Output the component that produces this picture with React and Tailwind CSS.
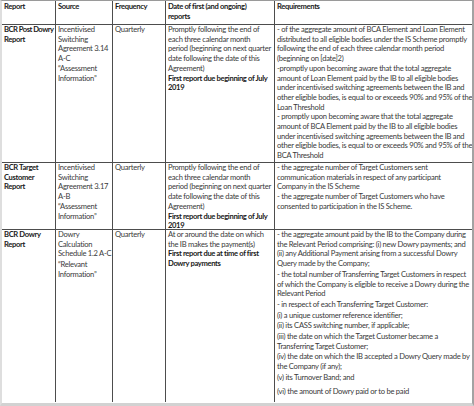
import React from "react";

const L = ({ children, b, cls = "" }) => (
  <div className={`whitespace-nowrap ${b ? "font-bold text-[#1a1a1a] tracking-[-0.35px]" : ""} ${cls}`}>{children}</div>
);

const Cell = ({ w, last, children, cls = "" }) => (
  <div
    className={`${w} shrink-0 pl-[2px] ${last ? "" : "border-r border-[#4d4d4d]"} ${cls}`}
  >
    {children}
  </div>
);

const Row = ({ h, bottom = true, cells }) => (
  <div className={`flex ${h} ${bottom ? "border-b border-[#4d4d4d]" : ""}`}>
    <Cell w="w-[54px]">{cells[0]}</Cell>
    <Cell w="w-[57px]">{cells[1]}</Cell>
    <Cell w="w-[53px]">{cells[2]}</Cell>
    <Cell w="w-[109px]">{cells[3]}</Cell>
    <Cell w="w-[197px]" last>
      {cells[4]}
    </Cell>
  </div>
);

export default function App() {
  return (
    <div
      className="w-[474px] h-[406px] bg-white overflow-hidden border-t border-[#9a9a9a] border-l-2 border-l-[#dedede] border-r-2 border-r-[#a3a3a3] border-b-[3px] border-b-[#d2d2d2] text-[7.6px] leading-[9.7px] tracking-[-0.26px] text-[#3a3a3a]"
      style={{ fontFamily: "Lato, 'Liberation Sans', sans-serif" }}
    >
      <Row
        h="h-[24px]"
        cells={[
          <div className="pt-[1px]"><L b>Report</L></div>,
          <div className="pt-[1px]"><L b>Source</L></div>,
          <div className="pt-[1px]"><L b>Frequency</L></div>,
          <div className="pt-[1px]">
            <L b>Date of first (and ongoing)</L>
            <L b>reports</L>
          </div>,
          <div className="pt-[1px]"><L b>Requirements</L></div>,
        ]}
      />
      <Row
        h="h-[138px]"
        cells={[
          <div>
            <div className="whitespace-nowrap font-bold text-[#1a1a1a] tracking-[-0.5px]">BCR Post Dowry</div>
            <L b>Report</L>
          </div>,
          <div>
            <L>Incentivised</L>
            <L>Switching</L>
            <L>Agreement 3.14</L>
            <L>A-C</L>
            <L>“Assessment</L>
            <L>Information”</L>
          </div>,
          <div>
            <L>Quarterly</L>
          </div>,
          <div>
            <L>Promptly following the end of</L>
            <L>each three calendar month</L>
            <L>period (beginning on next quarter</L>
            <L>date following the date of this</L>
            <L>Agreement)</L>
            <L b>First report due beginning of July</L>
            <L b>2019</L>
          </div>,
          <div>
            <L>- of the aggregate amount of BCA Element and Loan Element</L>
            <L>distributed to all eligible bodies under the IS Scheme promptly</L>
            <L>following the end of each three calendar month period</L>
            <L>(beginning on [date]2)</L>
            <L>-promptly upon becoming aware that the total aggregate</L>
            <L>amount of Loan Element paid by the IB to all eligible bodies</L>
            <L>under incentivised switching agreements between the IB and</L>
            <L>other eligible bodies, is equal to or exceeds 90% and 95% of the</L>
            <L>Loan Threshold</L>
            <L>- promptly upon becoming aware that the total aggregate</L>
            <L>amount of BCA Element paid by the IB to all eligible bodies</L>
            <L>under incentivised switching agreements between the IB and</L>
            <L>other eligible bodies, is equal to or exceeds 90% and 95% of the</L>
            <L>BCA Threshold</L>
          </div>,
        ]}
      />
      <Row
        h="h-[67px]"
        cells={[
          <div>
            <L b>BCR Target</L>
            <L b>Customer</L>
            <L b>Report</L>
          </div>,
          <div>
            <L>Incentivised</L>
            <L>Switching</L>
            <L>Agreement 3.17</L>
            <L>A-B</L>
            <L>“Assessment</L>
            <L>Information”</L>
          </div>,
          <div>
            <L>Quarterly</L>
          </div>,
          <div>
            <L>Promptly following the end of</L>
            <L>each three calendar month</L>
            <L>period (beginning on next quarter</L>
            <L>date following the date of this</L>
            <L>Agreement)</L>
            <L b>First report due beginning of July</L>
            <L b>2019</L>
          </div>,
          <div>
            <L>- the aggregate number of Target Customers sent</L>
            <L>communication materials in respect of any participant</L>
            <L>Company in the IS Scheme</L>
            <L>- the aggregate number of Target Customers who have</L>
            <L>consented to participation in the IS Scheme.</L>
          </div>,
        ]}
      />
      <Row
        h="h-[172px]"
        bottom={false}
        cells={[
          <div>
            <L b>BCR Dowry</L>
            <L b>Report</L>
          </div>,
          <div>
            <L>Dowry</L>
            <L>Calculation</L>
            <L>Schedule 1.2 A-C</L>
            <L cls="mt-[1px]">“Relevant</L>
            <L>Information”</L>
          </div>,
          <div>
            <L>Quarterly</L>
          </div>,
          <div>
            <L>At or around the date on which</L>
            <L>the IB makes the payment(s)</L>
            <L b>First report due at time of first</L>
            <L b>Dowry payments</L>
          </div>,
          <div>
            <L>- the aggregate amount paid by the IB to the Company during</L>
            <L>the Relevant Period comprising: (i) new Dowry payments; and</L>
            <L>(ii) any Additional Payment arising from a successful Dowry</L>
            <L>Query made by the Company;</L>
            <L cls="mt-[1px]">- the total number of Transferring Target Customers in respect</L>
            <L>of which the Company is eligible to receive a Dowry during the</L>
            <L>Relevant Period</L>
            <L cls="mt-[1px]">- in respect of each Transferring Target Customer:</L>
            <L cls="mt-[1px]">(i) a unique customer reference identifier;</L>
            <L cls="mt-[1px]">(ii) its CASS switching number, if applicable;</L>
            <L cls="mt-[1px]">(iii) the date on which the Target Customer became a</L>
            <L>Transferring Target Customer;</L>
            <L cls="mt-[1px]">(iv) the date on which the IB accepted a Dowry Query made by</L>
            <L>the Company (if any);</L>
            <L cls="mt-[1px]">(v) its Turnover Band; and</L>
            <L cls="mt-[4px]">(vi) the amount of Dowry paid or to be paid</L>
          </div>,
        ]}
      />
    </div>
  );
}
